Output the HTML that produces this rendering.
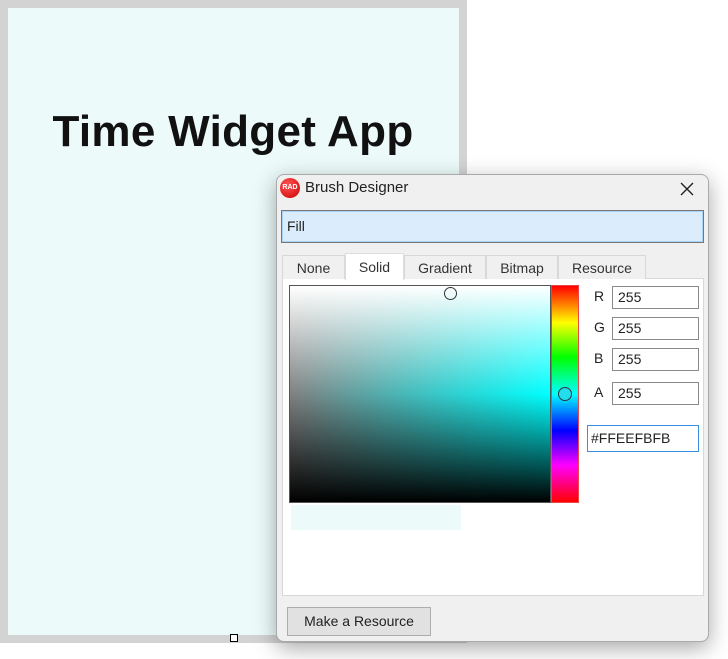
<!DOCTYPE html><html><head><style>
body{margin:0;width:728px;height:659px;background:#fff;position:relative;overflow:hidden;font-family:"Segoe UI","Liberation Sans",sans-serif;}
.a{position:absolute;box-sizing:border-box}
.inp{position:absolute;box-sizing:border-box;border:1px solid #8a8a8a;background:#fff;font-size:14px;padding-left:5px;line-height:20px;color:#222}
.lbl{position:absolute;font-size:14px;color:#222}
.tab{position:absolute;top:255px;height:24px;box-sizing:border-box;border:1px solid #d8d8d8;border-bottom:none;background:#f0f0f0;font-size:14px;color:#333;text-align:center;line-height:24px}
</style></head><body>
<div class="a" style="left:0;top:0;width:467px;height:643px;background:#d3d3d3"></div>
<div class="a" style="left:8px;top:8px;width:451px;height:627px;background:#ecfbfa"></div>
<div class="a" style="left:0;top:106px;width:466px;text-align:center;font-size:44px;font-weight:bold;color:#111;line-height:52px;letter-spacing:0.3px">Time Widget App</div>
<div class="a" style="left:230px;top:634px;width:8px;height:8px;border:1.5px solid #000;background:#fff"></div>
<div class="a" style="left:276px;top:174px;width:433px;height:468px;background:#f0f0f0;border:1px solid #aaa;border-radius:8px;box-shadow:0 6px 22px rgba(0,0,0,.35)"></div>
<div class="a" style="left:280px;top:178px;width:20px;height:20px;border-radius:50%;background:radial-gradient(circle at 40% 35%,#f55,#c00);color:#fff;font-size:7px;font-weight:bold;text-align:center;line-height:20px">RAD</div>
<div class="lbl" style="left:305px;top:179px;font-size:15px">Brush Designer</div>
<svg class="a" style="left:680px;top:182px" width="14" height="14"><path d="M1 1L13 13M13 1L1 13" stroke="#222" stroke-width="1.4"/></svg>
<div class="a" style="left:281px;top:210px;width:423px;height:33px;background:#dbecfc;border:1px solid #777;box-shadow:inset 0 0 0 1px #a9d3f5"></div>
<div class="lbl" style="left:287px;top:218px">Fill</div>
<div class="a" style="left:282px;top:278px;width:422px;height:318px;background:#fff;border:1px solid #d8d8d8"></div>
<div class="tab" style="left:282px;width:63px">None</div>
<div class="tab" style="left:345px;width:59px;background:#fff;top:253px;height:27px;line-height:27px;border-color:#ddd">Solid</div>
<div class="tab" style="left:404px;width:82px">Gradient</div>
<div class="tab" style="left:486px;width:72px">Bitmap</div>
<div class="tab" style="left:558px;width:88px">Resource</div>
<div class="a" style="left:289px;top:285px;width:262px;height:218px;background:linear-gradient(to bottom,#fff,rgba(255,255,255,0) 50%,rgba(0,0,0,0) 50%,#000),linear-gradient(to right,#808080,#0ff);border:1px solid #555"></div>
<div class="a" style="left:444px;top:287px;width:13px;height:13px;border-radius:50%;border:1.5px solid #333"></div>
<div class="a" style="left:551px;top:285px;width:28px;height:218px;background:linear-gradient(to bottom,#f00,#ff0 17%,#0f0 33%,#0ff 50%,#00f 67%,#f0f 83%,#f00);border:1px solid #e44"></div>
<div class="a" style="left:558px;top:387px;width:14px;height:14px;border-radius:50%;border:1.5px solid #333;background:#2de"></div>
<div class="a" style="left:291px;top:505px;width:170px;height:25px;background:#ecfbfa"></div>
<div class="lbl" style="left:594px;top:288px">R</div><div class="inp" style="left:612px;top:286px;width:87px;height:23px">255</div>
<div class="lbl" style="left:594px;top:319px">G</div><div class="inp" style="left:612px;top:317px;width:87px;height:23px">255</div>
<div class="lbl" style="left:594px;top:350px">B</div><div class="inp" style="left:612px;top:348px;width:87px;height:23px">255</div>
<div class="lbl" style="left:594px;top:384px">A</div><div class="inp" style="left:612px;top:382px;width:87px;height:23px">255</div>
<div class="inp" style="left:587px;top:425px;width:112px;height:27px;border-color:#3b8fe0;padding-left:3px;line-height:25px">#FFEEFBFB</div>
<div class="a" style="left:287px;top:607px;width:144px;height:29px;background:#e1e1e1;border:1px solid #adadad;font-size:14px;text-align:center;line-height:27px;color:#222">Make a Resource</div>
</body></html>
